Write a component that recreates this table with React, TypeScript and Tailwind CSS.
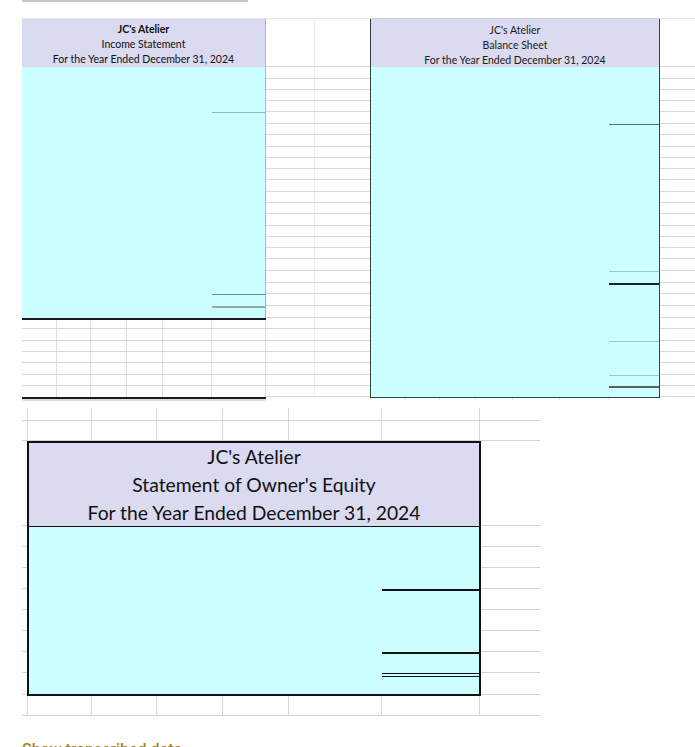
import React from "react";

const HC: Record<number, string> = {
  1: "h-[1px]",
  11: "h-[11px]",
  12: "h-[12px]",
  13: "h-[13px]",
  20: "h-[20px]",
  21: "h-[21px]",
  22: "h-[22px]",
  85: "h-[85px]",
};

const WC: Record<number, string> = {
  5: "w-[5px]",
  6: "w-[6px]",
  34: "w-[34px]",
  35: "w-[35px]",
  36: "w-[36px]",
  37: "w-[37px]",
  47: "w-[47px]",
  49: "w-[49px]",
  50: "w-[50px]",
  51: "w-[51px]",
  54: "w-[54px]",
  60: "w-[60px]",
  64: "w-[64px]",
  65: "w-[65px]",
  66: "w-[66px]",
  93: "w-[93px]",
  98: "w-[98px]",
};

// row heights of the upper sheet, starting at y=67
const topRows = [12, 11, 11, 11, 12, 11, 12, 11, 11, 11, 12, 11, 11, 12, 11, 11, 11, 12, 12, 11, 12, 12, 11, 12, 11, 11, 12, 11, 11];

const FONT = "[font-family:Lato,'Liberation_Sans',sans-serif]";

// rules drawn at the top edge of the given row
const incomeLines: Record<number, string> = {
  4: "border-t border-t-[#93b9b9]",
  20: "border-t border-t-[#6a8a8a]",
  21: "border-t-2 border-t-[#8fa9a9]",
};

const balanceLines: Record<number, string> = {
  5: "border-t border-t-[#56706f]",
  18: "border-t border-t-[#9cc9c9]",
  19: "border-t-2 border-t-[#1b2626]",
  24: "border-t border-t-[#9cc9c9]",
  27: "border-t border-t-[#9cc9c9]",
  28: "border-t-2 border-t-[#55625f]",
};

function IncomeStatement() {
  const cols = [35, 34, 36, 36, 49, 54];
  return (
    <div className="flex w-[244px] flex-col">
      <div className="h-[1px] bg-[#e6e6e6]" />
      <div className={`flex h-[48px] flex-col items-center border-r border-[#b4b4b4] bg-[#dadaf0] pt-[3px] text-[10.5px] leading-[15px] text-[#111] ${FONT}`}>
        <div className="font-bold">JC's Atelier</div>
        <div>Income Statement</div>
        <div>For the Year Ended December 31, 2024</div>
      </div>
      {topRows.slice(0, 22).map((h, i) => (
        <div key={i} className={`flex ${HC[h]} bg-[#ccffff]`}>
          <div className="flex-1" />
          <div className={`w-[54px] border-r border-r-[#b4b4b4] ${incomeLines[i] ?? ""}`} />
        </div>
      ))}
      {topRows.slice(22).map((h, i) => (
        <div key={i} className={`flex ${HC[h]} ${i === 0 ? "border-t-2 border-t-[#1c1c1c]" : ""}`}>
          {cols.map((w, j) => (
            <div key={j} className={`${WC[w]} border-r border-r-[#dedede] ${i === 6 ? "" : "border-b border-b-[#d6d6d6]"}`} />
          ))}
        </div>
      ))}
      <div className="h-[2px] bg-[#1c1c1c]" />
      <div className="h-[2px] bg-[#dadaf0]" />
    </div>
  );
}

function GapGrid({ width, split }: { width: string; split: boolean }) {
  return (
    <div className={`flex ${width} flex-col`}>
      <div className="h-[1px] bg-[#e6e6e6]" />
      <div className="flex h-[48px] border-b border-b-[#d6d6d6]">
        {split && <div className="w-[49px] border-r border-r-[#ececec]" />}
      </div>
      {topRows.map((h, i) => (
        <div key={i} className={`flex ${HC[h]} border-b border-b-[#d6d6d6]`}>
          {split && <div className="w-[49px] border-r border-r-[#ececec]" />}
        </div>
      ))}
    </div>
  );
}

function BalanceSheet() {
  const ticks = [35, 34, 36, 37, 47, 50, 51];
  return (
    <div className="flex w-[290px] flex-col">
      <div className="h-[1px] bg-[#d4d4d4]" />
      <div className="flex flex-col border-x border-b border-[#2e4040]">
        <div className={`flex h-[48px] flex-col items-center bg-[#dadaf0] pt-[4px] text-[10.5px] leading-[15px] text-[#1a1a1a] ${FONT}`}>
          <div>JC's Atelier</div>
          <div>Balance Sheet</div>
          <div>For the Year Ended December 31, 2024</div>
        </div>
        {topRows.map((h, i) => (
          <div key={i} className={`flex ${HC[h]} bg-[#ccffff]`}>
            <div className="flex-1" />
            <div className={`w-[50px] ${balanceLines[i] ?? ""}`} />
          </div>
        ))}
      </div>
      <div className="flex h-[2px]">
        {ticks.map((w, j) => (
          <div key={j} className={`${WC[w]} border-l border-l-[#e2e2e2]`} />
        ))}
      </div>
    </div>
  );
}

function OwnersEquity() {
  const cols = [6, 64, 65, 66, 66, 93, 98, 60];
  const sideRows = [85, 21, 21, 21, 21, 21, 21, 21, 22];
  const bodyRows = [20, 21, 21, 21, 21, 21, 21, 21];
  // rules drawn at the top edge of the given body row
  const lastCell: Record<number, string> = {
    3: "border-t-2 border-t-[#111]",
    6: "border-t-2 border-t-[#111]",
    7: "border-t-4 border-double border-t-[#111]",
  };
  const gridRow = (h: number, key: string) => (
    <div key={key} className={`flex ${HC[h]}`}>
      {cols.map((w, j) => (
        <div
          key={j}
          className={`${WC[w]} border-b border-b-[#d4d4d4] ${j < cols.length - 1 ? "border-r border-r-[#d8d8d8]" : ""}`}
        />
      ))}
    </div>
  );
  return (
    <div className="ml-[22px] mt-[7px] flex w-[518px] flex-col">
      {gridRow(13, "a")}
      {gridRow(20, "b")}
      <div className="flex">
        <div className="flex w-[5px] flex-col">
          {sideRows.map((h, i) => (
            <div key={i} className={`${HC[h]} border-b border-b-[#d4d4d4]`} />
          ))}
        </div>
        <div className="flex h-[255px] w-[454px] flex-col border-2 border-[#111]">
          <div className={`flex h-[84px] flex-col items-center border-b border-b-[#111] bg-[#dadaf0] text-[19.3px] leading-[28px] text-[#111] ${FONT}`}>
            <div>JC's Atelier</div>
            <div>Statement of Owner's Equity</div>
            <div>For the Year Ended December 31, 2024</div>
          </div>
          {bodyRows.map((h, i) => (
            <div key={i} className={`flex ${HC[h]} bg-[#ccffff]`}>
              <div className="flex-1" />
              <div className={`w-[97px] ${lastCell[i] ?? ""}`} />
            </div>
          ))}
        </div>
        <div className="flex w-[59px] flex-col">
          {sideRows.map((h, i) => (
            <div key={i} className={`${HC[h]} border-b border-b-[#d4d4d4]`} />
          ))}
        </div>
      </div>
      {gridRow(20, "c")}
    </div>
  );
}

export default function App() {
  return (
    <div className="relative h-[747px] w-[695px] overflow-hidden bg-white">
      <div className="ml-[22px] h-[2px] w-[226px] bg-[#c6c6c6]" />
      <div className="ml-[22px] mt-[16px] flex items-start">
        <IncomeStatement />
        <GapGrid width="w-[104px]" split={true} />
        <BalanceSheet />
        <GapGrid width="w-[35px]" split={false} />
      </div>
      <OwnersEquity />
      <div className="ml-[22px] mt-[24px] text-[16px] font-medium leading-[20px] text-[#a3841a] [font-family:Roboto,'Liberation_Sans',sans-serif]">
        Show transcribed data
      </div>
    </div>
  );
}
